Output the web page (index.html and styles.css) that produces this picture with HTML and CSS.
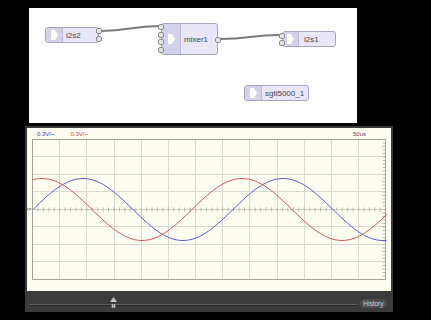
FILE: index.html
```html
<!DOCTYPE html>
<html>
<head>
<meta charset="utf-8">
<link rel="stylesheet" href="styles.css">
</head>
<body>
<div class="canvas">
  <svg class="wires" width="328" height="115" viewBox="0 0 328 115">
    <path d="M72,23 C101,23 101,18 131,18"/>
    <path d="M191,31 C221,31 221,27 251,27"/>
  </svg>

  <div class="node n-i2s2">
    <div class="icon"><svg width="7" height="10" viewBox="0 0 7 10"><polygon points="0,0 4,0 7,5 4,10 0,10"/></svg></div>
    <div class="label">i2s2</div>
    <span class="port out p1"></span>
    <span class="port out p2"></span>
  </div>

  <div class="node n-mixer">
    <div class="icon"><svg width="7" height="10" viewBox="0 0 7 10"><polygon points="0,0 4,0 7,5 4,10 0,10"/></svg></div>
    <div class="label">mixer1</div>
    <span class="port in m1"></span>
    <span class="port in m2"></span>
    <span class="port in m3"></span>
    <span class="port in m4"></span>
    <span class="port out mo"></span>
  </div>

  <div class="node n-i2s1">
    <div class="icon"><svg width="7" height="10" viewBox="0 0 7 10"><polygon points="0,0 4,0 7,5 4,10 0,10"/></svg></div>
    <div class="label">i2s1</div>
    <span class="port in p1"></span>
    <span class="port in p2"></span>
  </div>

  <div class="node n-sgtl">
    <div class="icon"><svg width="7" height="10" viewBox="0 0 7 10"><polygon points="0,0 4,0 7,5 4,10 0,10"/></svg></div>
    <div class="label">sgtl5000_1</div>
  </div>
</div>

<div class="scope">
  <div class="screen">
    <div class="legend">
      <span class="ch1">0.3V/~</span>
      <span class="ch2">0.3V/~</span>
      <span class="tb">50us</span>
    </div>
    <div class="plot">
      <svg class="grid" width="355" height="141" viewBox="0 0 355 141">
        <g class="gl">
          <path d="M27.5,0V141M54.5,0V141M82.5,0V141M109.5,0V141M136.5,0V141M163.5,0V141M190.5,0V141M217.5,0V141M245.5,0V141M272.5,0V141M299.5,0V141M326.5,0V141"/>
          <path d="M0,17.5H354M0,35.5H354M0,52.5H354M0,87.5H354M0,105.5H354M0,122.5H354"/>
        </g>
        <line class="axis" x1="0" y1="70.5" x2="354" y2="70.5"/>
        <line class="ticks" x1="0" y1="70.5" x2="354" y2="70.5"/>
        <line class="rticks" x1="352" y1="0" x2="352" y2="141"/>
        <rect class="border" x="0.5" y="0.5" width="353" height="140"/>
        <path class="wave blue" d="M1,70.5 C17.31,54.62 32.9,39.5 51,39.5 C69.1,39.5 84.69,54.62 101,70.5 C117.31,86.38 132.9,101.5 151,101.5 C169.1,101.5 184.69,86.38 201,70.5 C217.31,54.62 232.9,39.5 251,39.5 C269.1,39.5 284.69,54.62 301,70.5 C317.31,86.38 332.9,101.5 351,101.5 C369.1,101.5 384.69,86.38 401,70.5"/>
        <path class="wave red" d="M-40,70.5 C-23.69,54.62 -8.1,39.5 10,39.5 C28.1,39.5 43.69,54.62 60,70.5 C76.31,86.38 91.9,101.5 110,101.5 C128.1,101.5 143.69,86.38 160,70.5 C176.31,54.62 191.9,39.5 210,39.5 C228.1,39.5 243.69,54.62 260,70.5 C276.31,86.38 291.9,101.5 310,101.5 C328.1,101.5 343.69,86.38 360,70.5"/>
      </svg>
      <span class="trig">t=</span>
    </div>
  </div>
  <div class="controls">
    <div class="slider">
      <div class="track"></div>
      <svg class="thumb" width="7" height="12" viewBox="0 0 7 12">
        <polygon points="3.5,0 7,5 0,5" fill="#c4c4c4"/>
        <rect x="1.5" y="7" width="4" height="4" fill="#8a8a8a"/>
        <path d="M2.5,7.5V10.5M4.5,7.5V10.5" stroke="#cfcfcf" stroke-width="0.8"/>
      </svg>
    </div>
    <div class="history">History</div>
  </div>
</div>
</body>
</html>
```

FILE: styles.css
```css
html, body {
  margin: 0;
  padding: 0;
}

body {
  width: 431px;
  height: 320px;
  overflow: hidden;
  background: #000;
  font-family: "Liberation Sans", Arial, sans-serif;
}

/* ---------- design canvas ---------- */
.canvas {
  position: relative;
  width: 328px;
  height: 115px;
  margin: 8px 0 0 29px;
  background: #fff;
}

.wires {
  position: absolute;
  left: 0;
  top: 0;
}

.wires path {
  fill: none;
  stroke: #7b7b7b;
  stroke-width: 2;
}

.node {
  position: absolute;
  display: flex;
  box-sizing: border-box;
  height: 16px;
  border: 1px solid #a8a5c3;
  border-radius: 3px;
  background: #e8e6f7;
}

.icon {
  width: 16px;
  flex: none;
  display: flex;
  align-items: center;
  justify-content: center;
  background: #d4d1eb;
  border-right: 1px solid #bebbd8;
  border-radius: 2px 0 0 2px;
}

.icon polygon {
  fill: #fff;
}

.label {
  display: flex;
  align-items: center;
  padding-left: 3px;
  font-size: 8px;
  color: #454545;
  white-space: nowrap;
}

.port {
  position: absolute;
  width: 6px;
  height: 6px;
  box-sizing: border-box;
  border: 1px solid #8e8e8e;
  border-radius: 2px;
  background: #e3e3e3;
}

.port.out { right: -4px; }
.port.in { left: -4px; }

.n-i2s2 { left: 16px; top: 19px; width: 54px; }
.n-i2s2 .p1 { top: 0; }
.n-i2s2 .p2 { top: 8px; }

.n-mixer { left: 132px; top: 15px; width: 57px; height: 32px; }
.n-mixer .icon { width: 18px; }
.n-mixer .m1 { top: 0; }
.n-mixer .m2 { top: 8px; }
.n-mixer .m3 { top: 15px; }
.n-mixer .m4 { top: 23px; }
.n-mixer .mo { top: 13px; }

.n-i2s1 { left: 253px; top: 23px; width: 54px; }
.n-i2s1 .icon { width: 15px; }
.n-i2s1 .label { padding-left: 5px; }
.n-i2s1 .p1 { top: 1px; }
.n-i2s1 .p2 { top: 8px; }

.n-sgtl { left: 215px; top: 77px; width: 65px; }

/* ---------- scope ---------- */
.scope {
  width: 368px;
  height: 186px;
  margin: 3px 0 0 25px;
  box-sizing: border-box;
  padding: 2px 2px 0;
  background: #3b3b3b;
  display: flex;
  flex-direction: column;
}

.screen {
  height: 163px;
  box-sizing: border-box;
  padding-left: 5px;
  background: #fcfcf1;
}

.legend {
  display: flex;
  height: 11px;
  padding: 0 25px 0 5px;
  font-size: 6px;
  line-height: 12px;
  white-space: nowrap;
}

.ch1 { color: #4a4ab0; }
.ch2 { color: #c84646; margin-left: 16px; }
.tb { color: #7c3068; margin-left: auto; }

.plot {
  position: relative;
  width: 355px;
  height: 141px;
}

.grid {
  display: block;
}

.gl path {
  fill: none;
  stroke: #d9d9cf;
  stroke-width: 1;
}

.axis {
  stroke: #cfcfc4;
  stroke-width: 1;
}

.ticks {
  stroke: #b9b9b0;
  stroke-width: 4;
  stroke-dasharray: 1 4.434;
}

.rticks {
  stroke: #b9b9b0;
  stroke-width: 3;
  stroke-dasharray: 1 2.5;
}

.border {
  fill: none;
  stroke: #a4a49c;
  stroke-width: 1;
}

.wave {
  fill: none;
  stroke-width: 1;
}

.wave.blue { stroke: #5a5ad0; }
.wave.red { stroke: #d25a5a; }

.trig {
  position: absolute;
  left: -5px;
  top: 67px;
  font-size: 5px;
  line-height: 6px;
  color: #555;
}

.controls {
  flex: 1;
  display: flex;
  align-items: center;
  padding: 0 4px 0 3px;
}

.slider {
  position: relative;
  flex: 1;
  height: 21px;
}

.track {
  position: absolute;
  left: 0;
  right: 0;
  top: 13px;
  height: 1px;
  border-top: 1px solid #5e5e5e;
  background: #262626;
}

.thumb {
  position: absolute;
  left: 80px;
  top: 6px;
}

.history {
  margin: 3px 0 0 3px;
  height: 9px;
  padding: 0 3.5px;
  border-radius: 5px;
  background: #4e4e4e;
  color: #d6d6d6;
  font-size: 6.5px;
  line-height: 9px;
}
```
